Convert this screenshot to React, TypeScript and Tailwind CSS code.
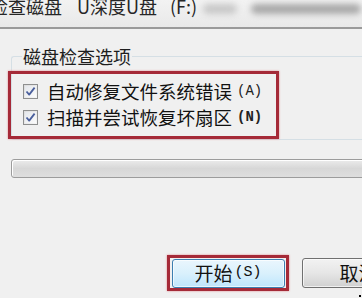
import React from "react";

const CJK = "font-['Noto_Sans_CJK_SC','Noto_Sans_CJK_JP',sans-serif]";
const MONO = "font-['Liberation_Mono',monospace]";

function Check() {
  return (
    <div className="w-[15px] h-[15px] border border-[#8e8f8f] bg-gradient-to-br from-[#dcdcdc] to-[#f6f6f6] flex items-center justify-center shrink-0">
      <div className="w-[11px] h-[11px] bg-gradient-to-br from-[#e4e7ec] to-[#fbfbfb] flex items-center justify-center">
        <svg width="11" height="11" viewBox="0 0 11 11">
          <path d="M1.5 5.5 L4.2 8.6 L9.6 1.6" fill="none" stroke="#4a5f9c" strokeWidth="1.8" strokeLinejoin="round" />
        </svg>
      </div>
    </div>
  );
}

export default function App() {
  return (
    <div className={`w-[362px] h-[298px] overflow-hidden bg-[#f0f0f0] relative ${CJK}`}>
      {/* title bar */}
      <div className="h-[29px] bg-gradient-to-b from-[#f2f2f2] to-[#e9e9e9] border-b-2 border-[#9a9a9a] flex items-start overflow-hidden">
        <div className="-ml-[10px] -mt-[3px] flex items-start text-[18px] leading-[18px] text-[#262626] whitespace-nowrap">
          <span>检查磁盘</span>
          <span className="ml-[15px]">U深度U盘</span>
          <span className="ml-[13px]">(F:)</span>
        </div>
        <div className="ml-[6px] mt-[4px] flex items-center blur-[3px]">
          <div className="w-[34px] h-[10px] bg-[#c8c8c8] rounded-full" />
          <div className="ml-[14px] w-[110px] h-[10px] bg-[#a8a8a8] rounded-full" />
        </div>
      </div>

      <div className="pl-[11px] pt-[16px]">
        <fieldset className="border border-[#d5dfe5] border-r-0 rounded-l-[3px]">
          <legend className="ml-[10px] px-[1px] text-[18px] leading-[22px] text-[#1e1e1e]">磁盘检查选项</legend>
          <div className="-ml-[4px] mt-[4px] w-[271px] h-[68px] border-[3px] border-[#a52a38] shadow-[0_0_2px_#e08a90] pt-[4px] pl-[12px]">
            <div className="flex items-center h-[26px]">
              <Check />
              <span className="ml-[9px] text-[18.5px] leading-[26px] text-[#111]">自动修复文件系统错误</span>
              <span className={`ml-[5px] text-[14px] ${MONO} text-[#222]`}>(A)</span>
            </div>
            <div className="flex items-center h-[26px]">
              <Check />
              <span className="ml-[9px] text-[18.5px] leading-[26px] text-[#111]">扫描并尝试恢复坏扇区</span>
              <span className={`ml-[5px] text-[14px] ${MONO} text-[#222] font-bold`}>(N)</span>
            </div>
          </div>
        </fieldset>

        {/* progress bar */}
        <div className="mt-[19px] h-[19px] w-[380px] border border-[#9c9c9c] rounded-[3px] bg-gradient-to-b from-[#ececec] via-[#d7d7d7] to-[#dedede] shadow-[inset_1px_1px_0_#ffffff]" />
      </div>

      {/* buttons */}
      <div className="flex items-center mt-[77px] pl-[167px]">
        <div className="w-[122px] h-[36px] border-[3px] border-[#a52a38] shadow-[0_0_2px_#e08a90] flex items-center justify-center shrink-0">
          <div className="w-[113px] h-[29px] border border-[#3c7fb1] rounded-[3px] bg-gradient-to-b from-[#eaf6fd] via-[#d9f0fc] to-[#bee6fd] shadow-[inset_0_0_0_1px_#ffffffaa] flex items-center justify-center">
            <span className="text-[19px] leading-[20px] text-[#111]">开始</span>
            <span className={`ml-[2px] text-[15px] ${MONO} text-[#111]`}>(S)</span>
          </div>
        </div>
        <div className="ml-[13px] w-[113px] h-[30px] border border-[#707070] rounded-[3px] bg-gradient-to-b from-[#f2f2f2] via-[#e6e6e6] to-[#d0d0d0] shadow-[inset_0_0_0_1px_#ffffffaa] flex items-center justify-center shrink-0">
          <span className="text-[19px] leading-[20px] text-[#111]">取消</span>
        </div>
      </div>
      <div className="absolute left-[359px] top-[295px] w-[2px] h-[2px] bg-black" />
    </div>
  );
}
